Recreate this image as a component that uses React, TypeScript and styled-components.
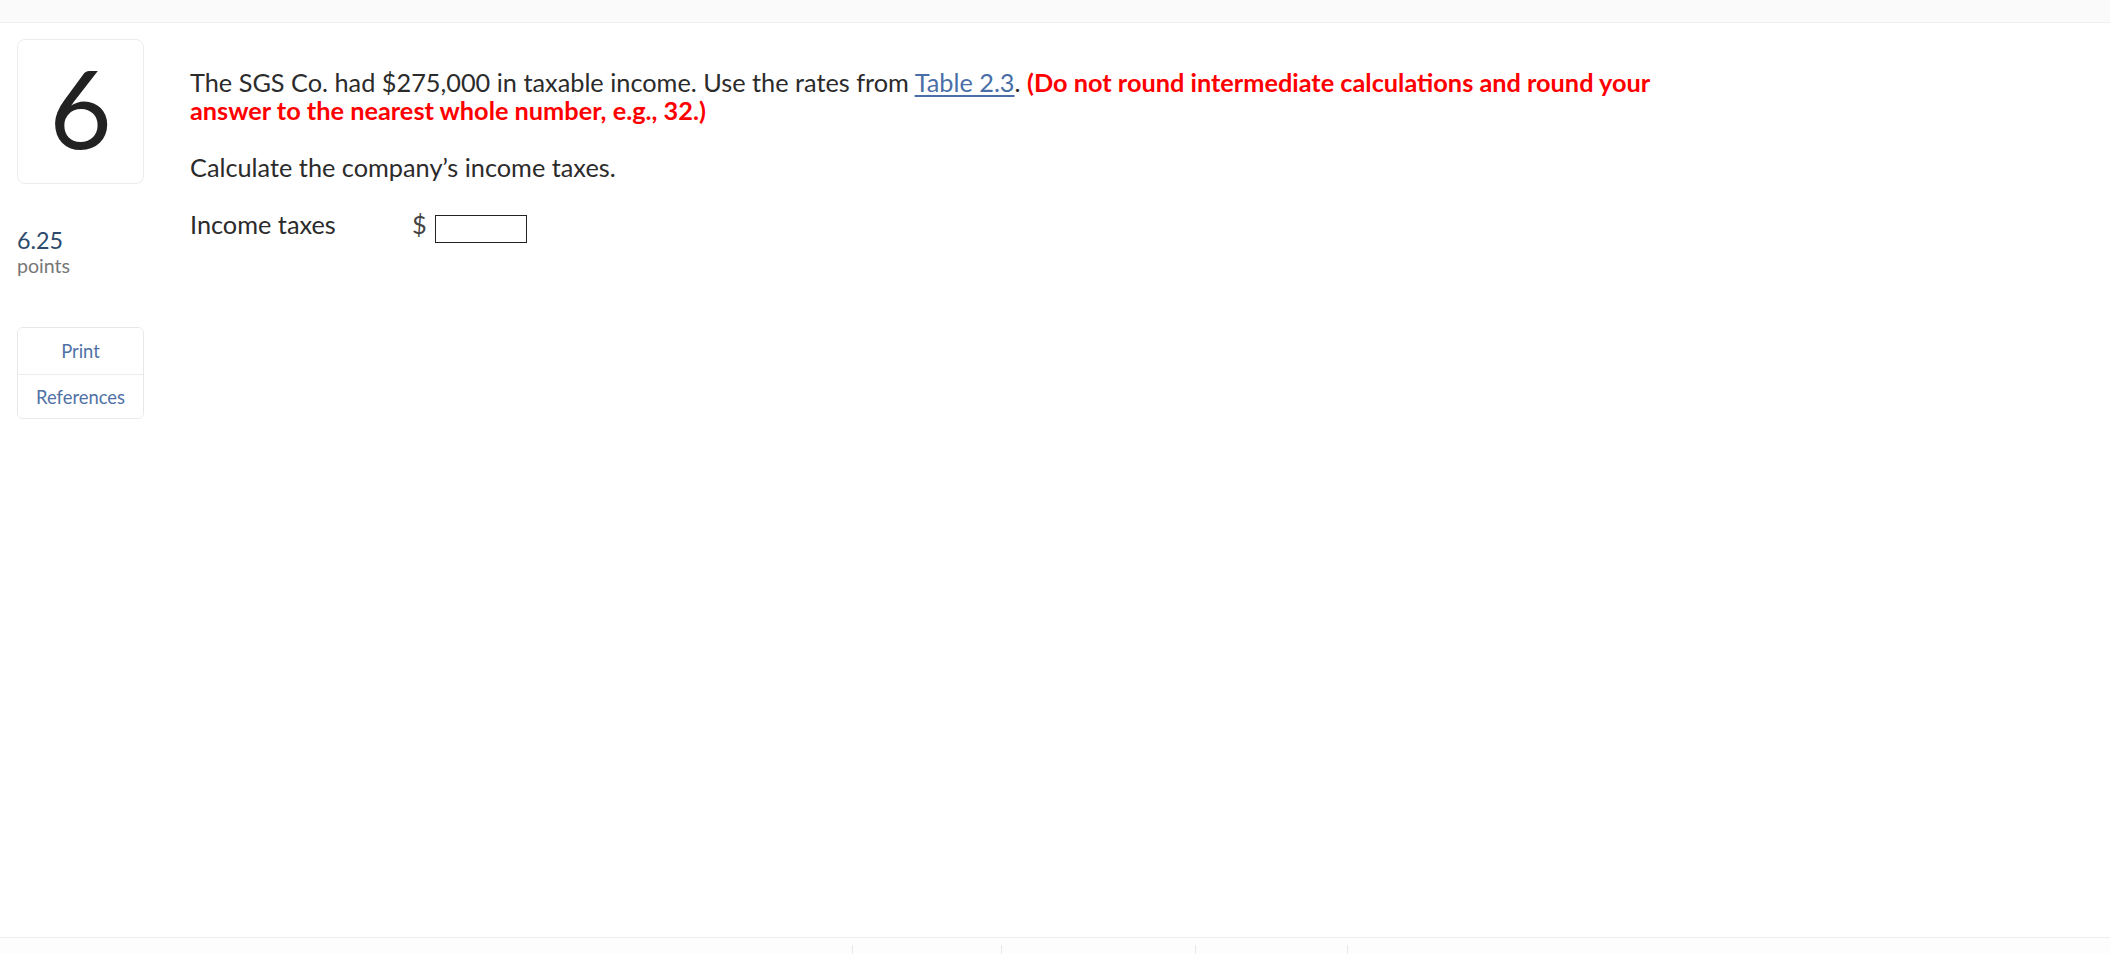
import React from "react";
import styled, { createGlobalStyle } from "styled-components";

const GlobalStyle = createGlobalStyle`
  html, body {
    margin: 0;
    padding: 0;
    background: #ffffff;
    overflow: hidden;
  }
  body {
    font-family: "Lato", "Open Sans", sans-serif;
    color: #2b2b2b;
  }
`;

const Page = styled.div`
  height: 100vh;
  display: flex;
  flex-direction: column;
  overflow: hidden;
`;

const TopBar = styled.div`
  flex: 0 0 22px;
  background: #fafafa;
  border-bottom: 1px solid #f0f0f0;
`;

const Body = styled.div`
  flex: 1 1 auto;
  display: flex;
  gap: 46px;
  padding: 16px 17px 0;
  min-height: 0;
`;

const Side = styled.aside`
  flex: 0 0 127px;
  display: flex;
  flex-direction: column;
`;

const NumberBox = styled.div`
  height: 145px;
  box-sizing: border-box;
  border: 1px solid #ececec;
  border-radius: 8px;
  display: flex;
  align-items: center;
  justify-content: center;
  padding-bottom: 10px;
  font-size: 108px;
  line-height: 1;
  color: #222222;
`;

const Points = styled.div`
  margin-top: 42px;
  display: flex;
  flex-direction: column;
`;

const PointsValue = styled.span`
  font-size: 23.3px;
  line-height: 28px;
  color: #2c4a6d;
`;

const PointsLabel = styled.span`
  font-size: 19.6px;
  line-height: 24px;
  color: #777777;
`;

const ToolGroup = styled.div`
  margin-top: 49px;
  border: 1px solid #e8e8e8;
  border-radius: 6px;
  display: flex;
  flex-direction: column;
  overflow: hidden;
`;

const ToolButton = styled.button<{ $h: number }>`
  height: ${(p) => p.$h}px;
  border: none;
  background: #ffffff;
  font-family: "Lato", sans-serif;
  font-size: 18.4px;
  color: #4f71a6;
  cursor: pointer;
  padding: 0;
  & + & {
    border-top: 1px solid #ececec;
  }
`;

const Main = styled.main`
  flex: 0 1 1500px;
  max-width: 1500px;
  font-size: 25.3px;
  line-height: 28px;
`;

const Para = styled.p<{ $top: number }>`
  margin: ${(p) => p.$top}px 0 0;
`;

const Link = styled.a`
  color: #4a6fa8;
  text-decoration: underline;
  text-decoration-thickness: 1.5px;
  text-underline-offset: 3px;
  cursor: pointer;
`;

const Note = styled.strong`
  color: #ff0000;
  font-weight: 700;
`;

const AnswerRow = styled.div`
  margin-top: 29px;
  display: flex;
  align-items: flex-start;
`;

const Label = styled.span`
  flex: 0 0 222px;
`;

const Currency = styled.span`
  color: #444444;
  margin-right: 8px;
`;

const AnswerInput = styled.input`
  margin-top: 5px;
  width: 92px;
  height: 28px;
  box-sizing: border-box;
  border: 1px solid #222222;
  border-radius: 0;
  padding: 0 4px;
  font-family: "Lato", sans-serif;
  font-size: 18px;
  outline: none;
`;

const Footer = styled.footer`
  flex: 0 0 17px;
  box-sizing: border-box;
  border-top: 1px solid #efefef;
  background: #fdfdfd;
  overflow: hidden;
  padding: 7px 0 0 852px;
`;

const FooterNav = styled.nav`
  display: flex;
`;

const FooterItem = styled.div<{ $w: number }>`
  box-sizing: border-box;
  width: ${(p) => p.$w}px;
  height: 40px;
  border-left: 1px solid #e9e9e9;
  &:last-child {
    width: ${(p) => p.$w + 1}px;
    border-right: 1px solid #e9e9e9;
  }
`;

export default function App() {
  return (
    <>
      <GlobalStyle />
      <Page>
        <TopBar />
        <Body>
          <Side>
            <NumberBox>6</NumberBox>
            <Points>
              <PointsValue>6.25</PointsValue>
              <PointsLabel>points</PointsLabel>
            </Points>
            <ToolGroup>
              <ToolButton $h={46}>Print</ToolButton>
              <ToolButton $h={44}>References</ToolButton>
            </ToolGroup>
          </Side>
          <Main>
            <Para $top={29}>
              The SGS Co. had $275,000 in taxable income. Use the rates from{" "}
              <Link>Table 2.3</Link>.{" "}
              <Note>
                (Do not round intermediate calculations and round your answer to the nearest whole
                number, e.g., 32.)
              </Note>
            </Para>
            <Para $top={29}>Calculate the company’s income taxes.</Para>
            <AnswerRow>
              <Label>Income taxes</Label>
              <Currency>$</Currency>
              <AnswerInput type="text" aria-label="Income taxes" />
            </AnswerRow>
          </Main>
        </Body>
        <Footer>
          <FooterNav>
            <FooterItem $w={149} />
            <FooterItem $w={194} />
            <FooterItem $w={152} />
          </FooterNav>
        </Footer>
      </Page>
    </>
  );
}
